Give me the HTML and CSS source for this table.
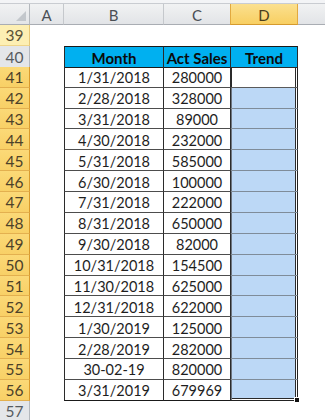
FILE: index.html
```html
<!DOCTYPE html>
<html>
<head>
<meta charset="utf-8">
<link rel="stylesheet" href="styles.css">
</head>
<body>
<div class="sheet">
  <div class="topband"></div>
  <div class="row colhdr">
    <div class="corner"><span class="tri"></span></div>
    <div class="ch">A</div>
    <div class="ch">B</div>
    <div class="ch">C</div>
    <div class="ch chsel">D</div>
    <div class="ch chlast"></div>
  </div>

  <div class="row"><div class="rh rh-hover">39</div></div>

  <div class="row">
    <div class="rh">40</div><div class="a"></div>
    <div class="cell b th">Month</div>
    <div class="cell c th">Act Sales</div>
    <div class="cell d th thd">Trend</div>
  </div>

  <div class="row"><div class="rh rh-sel">41</div><div class="a"></div><div class="cell b">1/31/2018</div><div class="cell c">280000</div><div class="cell d sel active"></div></div>
  <div class="row"><div class="rh rh-sel">42</div><div class="a"></div><div class="cell b">2/28/2018</div><div class="cell c">328000</div><div class="cell d sel"></div></div>
  <div class="row"><div class="rh rh-sel">43</div><div class="a"></div><div class="cell b">3/31/2018</div><div class="cell c">89000</div><div class="cell d sel"></div></div>
  <div class="row"><div class="rh rh-sel">44</div><div class="a"></div><div class="cell b">4/30/2018</div><div class="cell c">232000</div><div class="cell d sel"></div></div>
  <div class="row"><div class="rh rh-sel">45</div><div class="a"></div><div class="cell b">5/31/2018</div><div class="cell c">585000</div><div class="cell d sel"></div></div>
  <div class="row"><div class="rh rh-sel">46</div><div class="a"></div><div class="cell b">6/30/2018</div><div class="cell c">100000</div><div class="cell d sel"></div></div>
  <div class="row"><div class="rh rh-sel">47</div><div class="a"></div><div class="cell b">7/31/2018</div><div class="cell c">222000</div><div class="cell d sel"></div></div>
  <div class="row"><div class="rh rh-sel">48</div><div class="a"></div><div class="cell b">8/31/2018</div><div class="cell c">650000</div><div class="cell d sel"></div></div>
  <div class="row"><div class="rh rh-sel">49</div><div class="a"></div><div class="cell b">9/30/2018</div><div class="cell c">82000</div><div class="cell d sel"></div></div>
  <div class="row"><div class="rh rh-sel">50</div><div class="a"></div><div class="cell b">10/31/2018</div><div class="cell c">154500</div><div class="cell d sel"></div></div>
  <div class="row"><div class="rh rh-sel">51</div><div class="a"></div><div class="cell b">11/30/2018</div><div class="cell c">625000</div><div class="cell d sel"></div></div>
  <div class="row"><div class="rh rh-sel">52</div><div class="a"></div><div class="cell b">12/31/2018</div><div class="cell c">622000</div><div class="cell d sel"></div></div>
  <div class="row"><div class="rh rh-sel">53</div><div class="a"></div><div class="cell b">1/30/2019</div><div class="cell c">125000</div><div class="cell d sel"></div></div>
  <div class="row"><div class="rh rh-sel">54</div><div class="a"></div><div class="cell b">2/28/2019</div><div class="cell c">282000</div><div class="cell d sel"></div></div>
  <div class="row"><div class="rh rh-sel">55</div><div class="a"></div><div class="cell b">30-02-19</div><div class="cell c">820000</div><div class="cell d sel"></div></div>
  <div class="row"><div class="rh rh-sel">56</div><div class="a"></div><div class="cell b last">3/31/2019</div><div class="cell c last">679969</div><div class="cell d sel last selend"><span class="handle"></span></div></div>

  <div class="row"><div class="rh">57</div></div>
</div>
</body>
</html>
```

FILE: styles.css
```css
html, body {
  margin: 0;
  padding: 0;
  background: #ffffff;
}
body {
  font-family: Lato, "Open Sans", sans-serif;
  font-size: 14.5px;
  color: #1c1c1c;
  overflow: hidden;
}
.sheet {
  width: 325px;
  height: 420px;
  overflow: hidden;
}
.topband {
  height: 3px;
  background: #f3f4f6;
  border-bottom: 1px solid #c9ccd1;
}
.row {
  display: grid;
  grid-template-columns: 30px 34px 100px 67px 67px 1fr;
  height: 20.88px;
}
.colhdr {
  height: 21px;
}
.corner {
  position: relative;
  background: linear-gradient(#f1f2f3, #e3e5e8);
  border-right: 1px solid #b4b8bd;
  border-bottom: 1px solid #a9adb3;
  box-sizing: border-box;
}
.tri {
  position: absolute;
  right: 3px;
  bottom: 3px;
  width: 0;
  height: 0;
  border-left: 10px solid transparent;
  border-bottom: 10px solid #c3c7cc;
}
.ch {
  box-sizing: border-box;
  background: linear-gradient(#f1f2f3, #e2e4e7);
  border-right: 1px solid #c5c8cc;
  border-bottom: 1px solid #a9adb3;
  display: flex;
  align-items: center;
  justify-content: center;
  color: #4b4f55;
  font-size: 15px;
  padding-top: 1px;
}
.chsel {
  background: linear-gradient(#fbe08f, #f8cf62);
  border-left: 1px solid #e2a93f;
  border-right: 1px solid #e2a93f;
  border-bottom: 1px solid #d59a2e;
  color: #4a3d1c;
  margin-left: -1px;
}
.chlast {
  border-right: none;
}
.rh {
  box-sizing: border-box;
  background: #e4e6e9;
  border-right: 1px solid #b4b8bd;
  border-bottom: 1px solid #c9ccd0;
  display: flex;
  align-items: center;
  justify-content: center;
  color: #555a60;
  font-size: 15.5px;
  padding-top: 1px;
}
.rh-hover {
  background: #fdefb3;
  border-bottom-color: #efd58a;
  border-right-color: #e6c778;
  color: #5a5236;
}
.rh-sel {
  background: linear-gradient(#fbd977, #f8d066);
  border-bottom-color: #e3b04f;
  border-right-color: #d99a2c;
  color: #4c4129;
}
.cell {
  box-sizing: border-box;
  border-right: 1px solid #2b2b2b;
  border-bottom: 1px solid #4d4d4d;
  display: flex;
  align-items: center;
  justify-content: center;
  padding-top: 2px;
  white-space: nowrap;
  color: #1e1e1e;
}
.b {
  border-left: 1px solid #2b2b2b;
}
.th {
  background: #00b0f0;
  border-top: 1px solid #1a1a1a;
  border-bottom-color: #1a1a1a;
  font-weight: 700;
  font-size: 15px;
  color: #0b0b0b;
}
.thd {
  border-bottom-color: #c0603a;
}
.sel {
  background: #bcd8f6;
  border-bottom-color: #7f8c99;
  border-right-color: #222;
  box-shadow: inset 1px 0 0 #6d7580, inset -1px 0 0 #ffffff, inset -2px 0 0 #2a2a2a;
}
.active {
  background: #ffffff;
  border-bottom-color: #5a5a5a;
  box-shadow: inset 1px 0 0 #2a2a2a, inset 0 1px 0 #2a2a2a, inset -1px 0 0 #ffffff, inset -2px 0 0 #2a2a2a;
}
.last {
  border-bottom-color: #1a1a1a;
}
.selend {
  position: relative;
  border-bottom-color: #222;
  box-shadow: inset 1px 0 0 #6d7580, inset -1px 0 0 #ffffff, inset -2px 0 0 #2a2a2a, inset 0 -1px 0 #ffffff, inset 0 -2px 0 #2a2a2a;
}
.handle {
  position: absolute;
  right: -3px;
  bottom: -3px;
  width: 4px;
  height: 4px;
  background: #111;
  border: 1px solid #ffffff;
}
```
